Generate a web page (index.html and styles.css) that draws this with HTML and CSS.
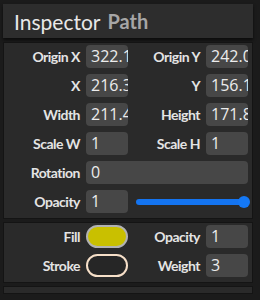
FILE: index.html
```html
<!DOCTYPE html>
<html lang="en">
<head>
    <meta charset="UTF-8">
    <title>Inspector</title>
    <link rel="stylesheet" href="styles.css">
</head>
<body>
    <div class="inspector">
        <div class="header">
            <span class="title">Inspector</span>
            <span class="subtitle">Path</span>
        </div>

        <div class="section">
            <div class="grid">
                <label>Origin X</label><div class="field">322.1</div>
                <label>Origin Y</label><div class="field">242.0</div>

                <label>X</label><div class="field">216.3</div>
                <label>Y</label><div class="field">156.1</div>

                <label>Width</label><div class="field">211.4</div>
                <label>Height</label><div class="field">171.8</div>

                <label>Scale W</label><div class="field">1</div>
                <label>Scale H</label><div class="field">1</div>

                <label>Rotation</label><div class="field wide">0</div>

                <label>Opacity</label><div class="field">1</div>
                <div class="slider"><div class="track"></div><div class="thumb"></div></div>
            </div>
        </div>

        <div class="section">
            <div class="grid">
                <label>Fill</label><div class="swatch fill"></div>
                <label>Opacity</label><div class="field">1</div>

                <label>Stroke</label><div class="swatch stroke"></div>
                <label>Weight</label><div class="field">3</div>
            </div>
        </div>

        <div class="section tail"></div>
    </div>
</body>
</html>
```

FILE: styles.css
```css
body {
    margin: 0;
    background-color: #1b1b1b;
    font-family: Lato, "Open Sans", sans-serif;
    color: #e4e4e4;
}

.inspector {
    width: 250px;
    padding: 4px 0 0 3px;
}

.header {
    height: 34px;
    background-color: #2d2d2d;
    box-shadow: 0 2px 3px rgba(0, 0, 0, 0.6);
    padding-left: 11px;
    display: flex;
    align-items: center;
    gap: 7px;
    margin-bottom: 4px;
}

.title {
    font-size: 21px;
    color: #e8e8e8;
}

.subtitle {
    font-size: 20px;
    font-weight: bold;
    color: #a6a6a6;
}

.section {
    background-color: #2a2a2a;
    border: 1px solid #141414;
    padding: 2px 9px 5px 0;
    margin-bottom: 3px;
}

.section.tail {
    height: 6px;
    padding: 0;
    margin: 0;
}

.grid {
    display: grid;
    grid-template-columns: 76px 42px 66px 42px;
    column-gap: 6px;
    row-gap: 6px;
    align-items: center;
}

label {
    text-align: right;
    font-size: 14px;
    font-weight: bold;
    letter-spacing: -0.5px;
    white-space: nowrap;
}

.field {
    height: 23px;
    line-height: 23px;
    background-color: #474747;
    border-radius: 4px;
    padding-left: 5px;
    font-family: "Open Sans", sans-serif;
    font-size: 16px;
    color: #ececec;
    overflow: hidden;
    white-space: nowrap;
}

.field.wide {
    grid-column: 2 / 5;
}

.slider {
    grid-column: 3 / 5;
    position: relative;
    height: 23px;
    margin-left: -1px;
    margin-right: -2px;
}

.track {
    position: absolute;
    left: 3px;
    right: 5px;
    top: 9px;
    height: 6px;
    background-color: #1474f0;
    border-radius: 3px;
}

.thumb {
    position: absolute;
    right: 0;
    top: 6px;
    width: 12px;
    height: 12px;
    border-radius: 50%;
    background-color: #1478f5;
}

.swatch {
    height: 23px;
    box-sizing: border-box;
    border-radius: 12px;
    border: 2px solid #b2b2b2;
}

.swatch.fill {
    background-color: #c9c000;
}

.swatch.stroke {
    background-color: #262626;
    border-color: #f6dfc8;
}
```
